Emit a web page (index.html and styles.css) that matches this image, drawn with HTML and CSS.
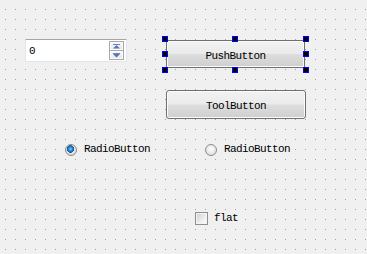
FILE: index.html
```html
<!DOCTYPE html>
<html lang="en">
<head>
  <meta charset="UTF-8">
  <title>Form - Designer</title>
  <link rel="stylesheet" href="styles.css">
</head>
<body>
<div class="form-canvas">

  <div class="spin-box">
    <span class="spin-value">0</span>
    <div class="spin-buttons">
      <div class="spin-btn"><svg width="7" height="5" viewBox="0 0 7 5"><rect x="0" y="0" width="7" height="1" fill="#6f86c4"/><path d="M3.5 1 L7 4.5 L0 4.5 Z" fill="#5a73bb"/></svg></div>
      <div class="spin-btn"><svg width="7" height="5" viewBox="0 0 7 5"><rect x="0" y="0" width="7" height="1" fill="#6f86c4"/><path d="M0 1 L7 1 L3.5 4.5 Z" fill="#5a73bb"/></svg></div>
    </div>
  </div>

  <div class="push-button">PushButton</div>
  <!-- selection handles -->
  <div class="handle" style="left:162px;top:36px"></div>
  <div class="handle" style="left:232px;top:36px"></div>
  <div class="handle" style="left:303px;top:36px"></div>
  <div class="handle" style="left:162px;top:51px"></div>
  <div class="handle" style="left:303px;top:51px"></div>
  <div class="handle" style="left:162px;top:67px"></div>
  <div class="handle" style="left:232px;top:67px"></div>
  <div class="handle" style="left:303px;top:67px"></div>

  <div class="tool-button">ToolButton</div>

  <label class="radio radio-one"><span class="radio-dot checked"></span>RadioButton</label>
  <label class="radio radio-two"><span class="radio-dot"></span>RadioButton</label>

  <label class="check"><span class="check-box"></span>flat</label>
</div>
</body>
</html>
```

FILE: styles.css
```css
* {
  margin: 0;
  padding: 0;
  box-sizing: border-box;
}

body {
  background: #f0f0f0;
  font-family: 'Liberation Mono', 'DejaVu Sans Mono', monospace;
  font-size: 11px;
  letter-spacing: -0.6px;
  color: #000;
}

.form-canvas {
  position: relative;
  width: 367px;
  height: 254px;
  overflow: hidden;
  background-color: #f0f0f0;
  background-image: conic-gradient(at 1px 1px, transparent 75%, #a0a0a0 0);
  background-size: 10px 10px;
  background-position: 5px 9px;
}

/* spin box */
.spin-box {
  position: absolute;
  left: 25px;
  top: 39px;
  width: 102px;
  height: 23px;
  background: #fff;
  border: 1px solid #e3e6ea;
  border-top-color: #a5a5a5;
  display: flex;
  align-items: center;
  justify-content: space-between;
  padding: 1px 2px 1px 2px;
}

.spin-value {
  padding-left: 1px;
  line-height: 14px;
}

.spin-buttons {
  display: flex;
  flex-direction: column;
  width: 15px;
  height: 19px;
}

.spin-btn {
  flex: 1;
  border: 1px solid #a8a8a8;
  background: linear-gradient(#f7f7f7, #e6e6e6);
  box-shadow: inset 0 0 0 1px #fdfdfd;
  display: flex;
  align-items: center;
  justify-content: center;
}

.spin-btn + .spin-btn {
  border-top: none;
}

/* buttons */
.push-button,
.tool-button {
  position: absolute;
  left: 166px;
  width: 139px;
  height: 28px;
  border: 1px solid #707070;
  border-radius: 3px;
  background: linear-gradient(#f2f2f2 0%, #ebebeb 48%, #dddddd 52%, #cfcfcf 100%);
  box-shadow: inset 0 0 0 1px #fbfbfb;
  display: flex;
  align-items: center;
  justify-content: center;
  padding-top: 3px;
}

.push-button {
  top: 40px;
  border-radius: 0;
}

.tool-button {
  top: 90px;
  height: 29px;
  width: 140px;
}

.handle {
  position: absolute;
  width: 6px;
  height: 6px;
  background: #000;
  border: 1px solid #0000ff;
}

/* radio buttons */
.radio {
  position: absolute;
  top: 143px;
  display: flex;
  align-items: center;
  gap: 7px;
  height: 13px;
  line-height: 13px;
}

.radio-one { left: 65px; }
.radio-two { left: 205px; }

.radio-dot {
  width: 12px;
  height: 12px;
  border-radius: 50%;
  border: 1px solid #8c8c8c;
  background: radial-gradient(circle at 50% 40%, #ffffff 0%, #e8e8e8 55%, #cfcfcf 100%);
  flex: none;
}

.radio-dot.checked {
  background:
    radial-gradient(circle at 45% 40%, #7fd0ff 0%, #1e7fd0 28%, #0b4f96 44%, transparent 47%),
    radial-gradient(circle at 50% 40%, #ffffff 0%, #e0e0e0 60%, #c8c8c8 100%);
}

/* check box */
.check {
  position: absolute;
  left: 195px;
  top: 212px;
  display: flex;
  align-items: center;
  gap: 6px;
  height: 13px;
  line-height: 13px;
}

.check-box {
  width: 13px;
  height: 13px;
  border: 1px solid #8e8f8f;
  background: linear-gradient(135deg, #cfcfcf 0%, #eeeeee 60%, #ffffff 100%);
  box-shadow: inset 0 0 0 1px #f4f4f4;
  flex: none;
}
```
